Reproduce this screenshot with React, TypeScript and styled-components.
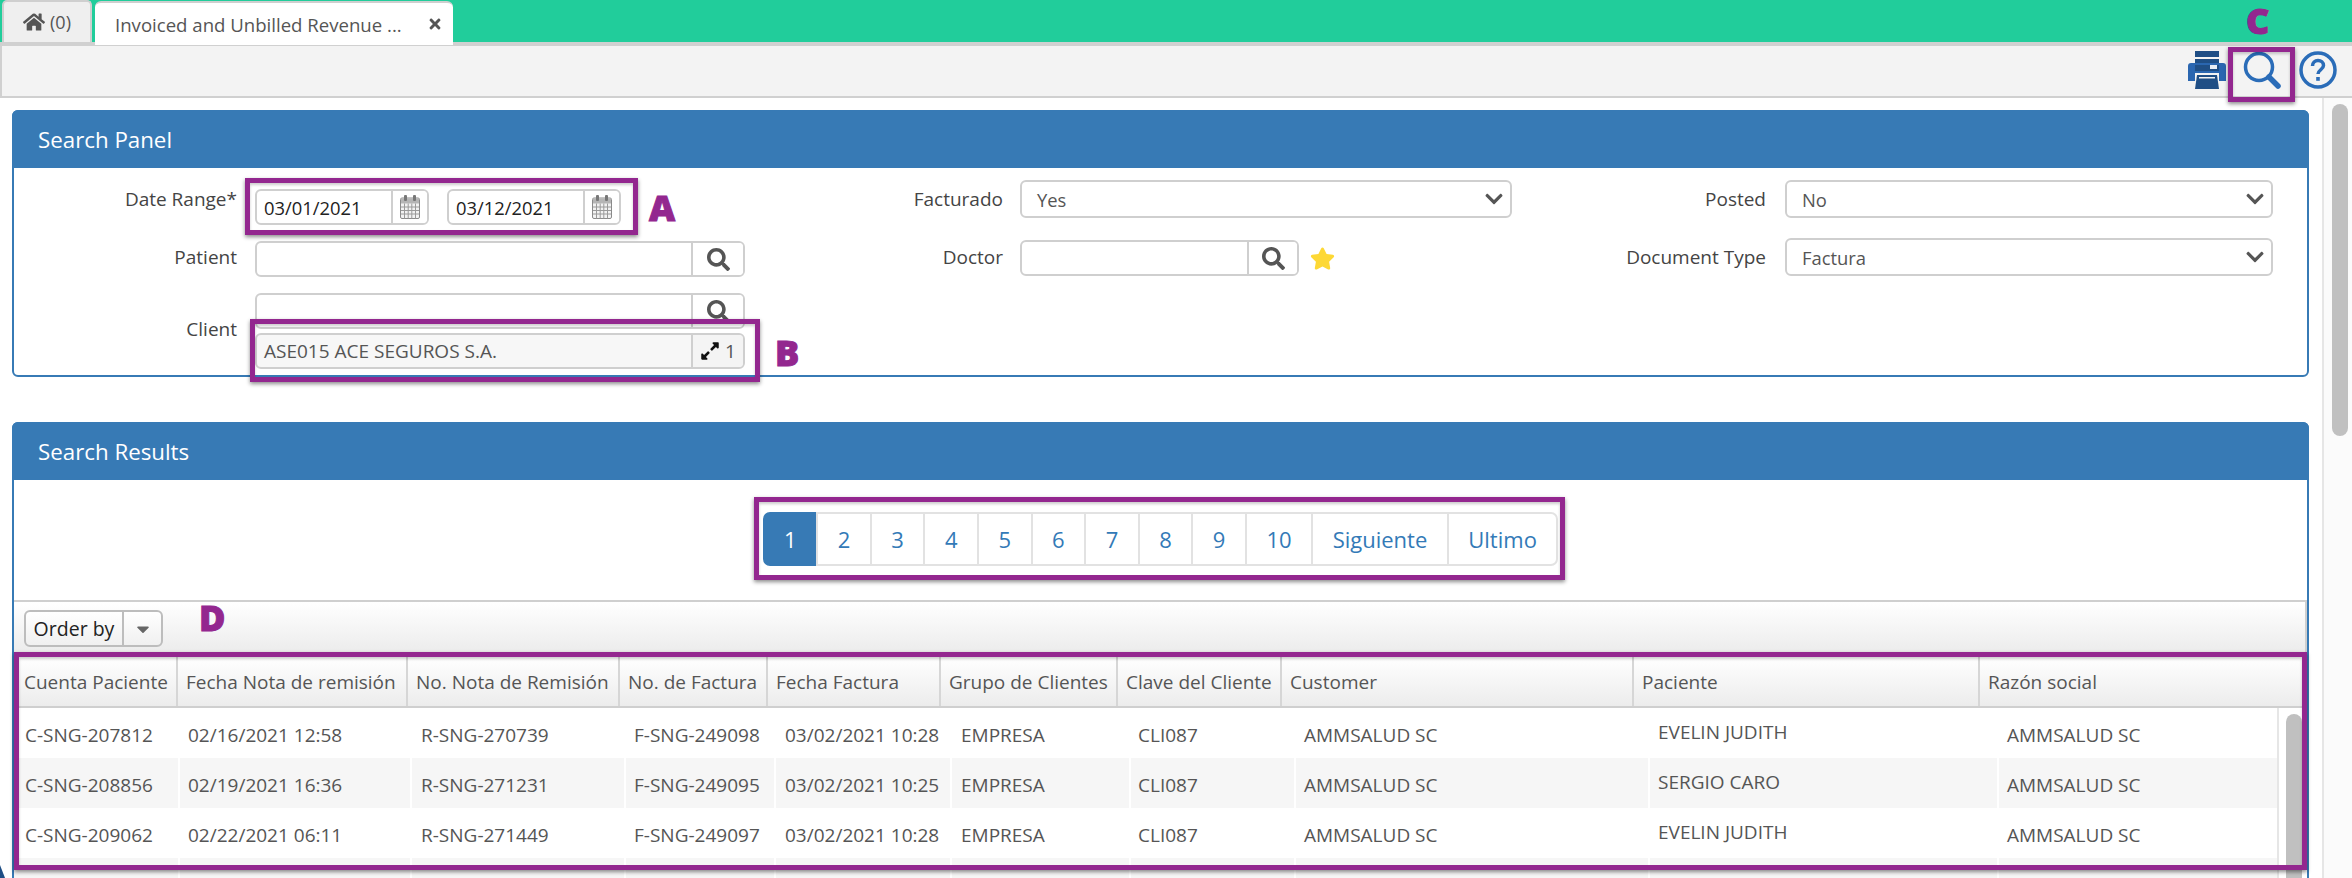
import React from 'react'
import styled, { createGlobalStyle } from 'styled-components'
import { FaHome, FaTimes, FaSearch, FaStar, FaChevronDown, FaExpandAlt, FaCaretDown } from 'react-icons/fa'

const GlobalStyle = createGlobalStyle`
  html, body {
    margin: 0;
    padding: 0;
    background: #ffffff;
  }
  * {
    box-sizing: border-box;
  }
`

const Page = styled.div`
  position: relative;
  width: 2352px;
  height: 878px;
  overflow: hidden;
  display: flex;
  flex-direction: column;
  font-family: "Open Sans", "Liberation Sans", sans-serif;
  color: #444;
`

const TabBar = styled.div`
  height: 46px;
  flex: none;
  display: flex;
  align-items: flex-start;
  gap: 3px;
  padding-left: 2px;
  background: #21cd9b;
  border-bottom: 4px solid #d0d0d0;
`

const HomeTab = styled.div`
  width: 90px;
  height: 42px;
  display: flex;
  align-items: center;
  justify-content: center;
  gap: 5px;
  background: #efefef;
  border: 2px solid #cfcfcf;
  border-bottom: none;
  border-radius: 5px 5px 0 0;
  font-size: 18px;
  color: #555;
`

const ActiveTab = styled.div`
  width: 358px;
  height: 44px;
  margin-top: 1px;
  display: flex;
  align-items: center;
  justify-content: space-between;
  padding: 0 10px 0 20px;
  background: #ffffff;
  border-radius: 6px 6px 0 0;
  border-top: 2px solid #cfcfcf;
  font-size: 18.6px;
  color: #555;
  white-space: nowrap;
`

const Toolbar = styled.div`
  height: 52px;
  flex: none;
  display: flex;
  align-items: center;
  justify-content: flex-end;
  padding: 0 15px 2px 0;
  background: #f3f3f3;
  border-left: 2px solid #d0d0d0;
  border-bottom: 2px solid #d0d0d0;
`

const ToolIcon = styled.svg<{ $gap?: number }>`
  display: block;
  width: 38px;
  height: 38px;
  margin-left: ${({ $gap }) => $gap ?? 18}px;
`

const Main = styled.div`
  flex: 1;
  display: flex;
  min-height: 0;
`

const Content = styled.div`
  width: 2322px;
  flex: none;
  padding: 12px 13px 0 12px;
  display: flex;
  flex-direction: column;
  gap: 45px;
`

const PageScroll = styled.div`
  flex: 1;
  padding: 6px 6px 0 8px;
  background: #fbfbfb;
  border-left: 2px solid #e6e6e6;
`

const PageThumb = styled.div`
  width: 16px;
  height: 332px;
  border-radius: 8px;
  background: #c0c0c0;
`

const Panel = styled.section`
  border: 2px solid #377ab5;
  border-radius: 6px;
  flex: none;
`

const PanelTitle = styled.h2`
  height: 58px;
  margin: -2px -2px 0;
  padding: 0 0 0 26px;
  display: flex;
  align-items: center;
  background: #377ab5;
  border-radius: 6px 6px 0 0;
  color: #ffffff;
  font-size: 22.3px;
  font-weight: 400;
`

const FormGrid = styled.div`
  display: grid;
  grid-template-columns: 241px 490px 275px 492px 273px 488px;
  grid-template-rows: 58px 55px 76px;
  padding-top: 12px;
  height: 207px;
`

const Label = styled.div<{ $top?: number; $pad?: number }>`
  padding-top: ${({ $top }) => $top ?? 8}px;
  padding-right: ${({ $pad }) => $pad ?? 18}px;
  text-align: right;
  font-size: 19px;
  line-height: 22px;
  color: #444;
`

const Cell = styled.div<{ $top?: number }>`
  padding-top: ${({ $top }) => $top ?? 0}px;
  display: flex;
  flex-direction: column;
  gap: 4px;
`

const DateRow = styled.div`
  display: flex;
  gap: 18px;
`

const Group = styled.div<{ $width?: number; $shade?: boolean }>`
  width: ${({ $width }) => ($width ? `${$width}px` : '100%')};
  height: 36px;
  display: flex;
  border: 2px solid #cfcfcf;
  border-radius: 6px;
  background: ${({ $shade }) => ($shade ? '#f7f7f7' : '#ffffff')};
  overflow: hidden;
`

const TextInput = styled.input`
  flex: 1;
  min-width: 0;
  border: none;
  outline: none;
  background: transparent;
  padding: 0 7px;
  font-family: inherit;
  font-size: 18.4px;
  color: #222;
`

const ChipText = styled.div`
  flex: 1;
  padding-left: 7px;
  display: flex;
  align-items: center;
  font-size: 19px;
  color: #555;
`

const Addon = styled.div<{ $width: number; $shade?: boolean }>`
  width: ${({ $width }) => $width}px;
  flex: none;
  display: flex;
  align-items: center;
  justify-content: center;
  gap: 5px;
  border-left: 2px solid #cfcfcf;
  background: ${({ $shade }) => ($shade ? '#f4f4f4' : '#ffffff')};
  color: #555;
  font-size: 19px;
`

const SelectBox = styled.div`
  height: 38px;
  display: flex;
  align-items: center;
  justify-content: space-between;
  padding: 0 6px 0 15px;
  border: 2px solid #cfcfcf;
  border-radius: 6px;
  background: #ffffff;
  font-size: 18.4px;
  color: #555;
`

const DoctorRow = styled.div`
  display: flex;
  align-items: center;
  gap: 11px;
  color: #fdd835;
`

const Pager = styled.nav`
  height: 120px;
  padding-bottom: 2px;
  display: flex;
  align-items: center;
  justify-content: center;
`

const PageLink = styled.a<{ $active?: boolean }>`
  height: 54px;
  display: flex;
  align-items: center;
  padding: 0 19.5px;
  margin-left: -2px;
  border: 2px solid ${({ $active }) => ($active ? '#377ab5' : '#e2e2e2')};
  background: ${({ $active }) => ($active ? '#377ab5' : '#ffffff')};
  color: ${({ $active }) => ($active ? '#ffffff' : '#337ab7')};
  font-size: 22px;
  &:first-child {
    border-radius: 7px 0 0 7px;
    margin-left: 0;
  }
  &:last-child {
    border-radius: 0 7px 7px 0;
  }
`

const ListBar = styled.div`
  height: 52px;
  padding: 8px 0 0 10px;
  border-top: 2px solid #cfcfcf;
  border-right: 2px solid #cfcfcf;
  background: linear-gradient(#ffffff, #ececec);
`

const OrderButton = styled.div`
  width: 139px;
  height: 37px;
  display: flex;
  border: 2px solid #bdbdbd;
  border-radius: 6px;
  background: linear-gradient(#ffffff, #f0f0f0);
  font-size: 19.5px;
  color: #222;
`

const OrderLabel = styled.div`
  width: 98px;
  display: flex;
  align-items: center;
  justify-content: center;
  border-right: 2px solid #bdbdbd;
`

const OrderCaret = styled.div`
  flex: 1;
  display: flex;
  align-items: center;
  justify-content: center;
  color: #666;
`

const HeaderRow = styled.div`
  height: 56px;
  display: flex;
  background: linear-gradient(#ffffff, #ececec);
  border-top: 5px solid #ececec;
  border-bottom: 2px solid #cfcfcf;
`

const HeaderCell = styled.div<{ $width?: number; $pad?: number }>`
  width: ${({ $width }) => ($width ? `${$width}px` : 'auto')};
  flex: ${({ $width }) => ($width ? 'none' : '1')};
  padding-left: ${({ $pad }) => $pad ?? 8}px;
  display: flex;
  align-items: center;
  font-size: 19px;
  color: #555;
  white-space: nowrap;
  border-right: 2px solid #d6d6d6;
  &:last-child {
    border-right: none;
  }
`

const TableBody = styled.div`
  display: flex;
`

const Rows = styled.div`
  width: 2263px;
  flex: none;
`

const Row = styled.div<{ $striped?: boolean }>`
  height: 50px;
  display: grid;
  grid-template-columns: 164px 230px 212px 148px 174px 177px 163px 352px 347px 278px;
  column-gap: 2px;
  & > div {
    background: ${({ $striped }) => ($striped ? '#f6f6f6' : '#ffffff')};
  }
`

const RowCell = styled.div<{ $pad?: number; $raised?: boolean }>`
  padding: ${({ $raised }) => ($raised ? '0 0 3px' : '3px 0 0')};
  padding-left: ${({ $pad }) => $pad ?? 8}px;
  display: flex;
  align-items: center;
  font-size: 19px;
  color: #555;
  white-space: nowrap;
`

const BodyScroll = styled.div`
  width: 25px;
  flex: none;
  padding: 6px 0 0 7px;
  border-left: 2px solid #e6e6e6;
`

const BodyThumb = styled.div`
  width: 16px;
  height: 300px;
  border-radius: 8px;
  background: #c0c0c0;
`

const Callout = styled.div<{ $x: number; $y: number; $w: number; $h: number }>`
  position: absolute;
  left: ${({ $x }) => $x}px;
  top: ${({ $y }) => $y}px;
  width: ${({ $w }) => $w}px;
  height: ${({ $h }) => $h}px;
  border: 5px solid #93278f;
  box-shadow: 0 2px 4px rgba(0, 0, 0, 0.45), inset 0 2px 3px rgba(0, 0, 0, 0.2);
  pointer-events: none;
`

const CalloutLetter = styled.div<{ $x: number; $y: number }>`
  position: absolute;
  left: ${({ $x }) => $x}px;
  top: ${({ $y }) => $y}px;
  font-family: "Open Sans", sans-serif;
  font-weight: 800;
  font-size: 36px;
  line-height: 36px;
  color: #93278f;
  -webkit-text-stroke: 1px #93278f;
`

// sliver of another picture showing at the bottom left of the screenshot
const CornerSliver = styled.div`
  position: absolute;
  left: 0;
  top: 865px;
  width: 5px;
  height: 13px;
  background: #1f4e85;
  clip-path: polygon(0 0, 100% 100%, 0 100%);
`

const CalendarIcon = () => (
  <svg width="22" height="26" viewBox="0 0 22 26">
    <rect x="1.500" y="4" width="19" height="20.500" rx="1.500" fill="#f2f2f2" stroke="#8a8a8a" strokeWidth="1" />
    <rect x="2" y="4.500" width="18" height="5" fill="#b5b5b5" />
    <rect x="5" y="1" width="3" height="6" rx="1" fill="#777" />
    <rect x="14" y="1" width="3" height="6" rx="1" fill="#777" />
    <path d="M2 13h18M2 16.500h18M2 20h18M5.500 9.500v15M9.200 9.500v15M12.800 9.500v15M16.500 9.500v15" stroke="#9a9a9a" strokeWidth="1" />
  </svg>
)

const PrinterIcon = () => (
  <ToolIcon viewBox="0 0 38 38">
    <rect x="7" y="0" width="24" height="6" fill="#1f4e85" />
    <path d="M7 8h24v4H7z" fill="#1f4e85" />
    <path d="M3 12h32a3 3 0 0 1 3 3v15h-7v-8H7v8H0V15a3 3 0 0 1 3-3z" fill="#2a66b0" />
    <rect x="7" y="14" width="24" height="6" fill="#1f4e85" />
    <rect x="22" y="14" width="7" height="4" fill="#e8eef6" />
    <path d="M9 24h20l2 14H7z" fill="#1f4e85" />
    <rect x="11" y="26" width="16" height="1.500" fill="#f3f3f3" />
  </ToolIcon>
)

const LensIcon = () => (
  <ToolIcon viewBox="0 0 38 38" $gap={17}>
    <circle cx="16" cy="16" r="13.500" fill="none" stroke="#2a6cb8" strokeWidth="3.500" />
    <path d="M26 26l9 9" stroke="#2a6cb8" strokeWidth="5.500" strokeLinecap="round" />
  </ToolIcon>
)

const HelpIcon = () => (
  <ToolIcon viewBox="0 0 38 38">
    <circle cx="19" cy="19" r="17" fill="none" stroke="#2a6cb8" strokeWidth="3.500" />
    <path d="M13.500 15c0-3.500 2.500-5.500 5.500-5.500s5.500 2 5.500 5c0 4-5.500 4.500-5.500 8.500" fill="none" stroke="#2a6cb8" strokeWidth="3.500" />
    <rect x="17.200" y="26" width="3.600" height="3.800" fill="#2a6cb8" />
  </ToolIcon>
)

const pages = ['2', '3', '4', '5', '6', '7', '8', '9', '10', 'Siguiente', 'Ultimo']

const columns: { title: string; width?: number; pad?: number }[] = [
  { title: 'Cuenta Paciente', width: 164, pad: 10 },
  { title: 'Fecha Nota de remisión', width: 230 },
  { title: 'No. Nota de Remisión', width: 212 },
  { title: 'No. de Factura', width: 148 },
  { title: 'Fecha Factura', width: 173 },
  { title: 'Grupo de Clientes', width: 177 },
  { title: 'Clave del Cliente', width: 164 },
  { title: 'Customer', width: 352 },
  { title: 'Paciente', width: 346 },
  { title: 'Razón social' },
]

const rows = [
  ['C-SNG-207812', '02/16/2021 12:58', 'R-SNG-270739', 'F-SNG-249098', '03/02/2021 10:28', 'EVELIN JUDITH'],
  ['C-SNG-208856', '02/19/2021 16:36', 'R-SNG-271231', 'F-SNG-249095', '03/02/2021 10:25', 'SERGIO CARO'],
  ['C-SNG-209062', '02/22/2021 06:11', 'R-SNG-271449', 'F-SNG-249097', '03/02/2021 10:28', 'EVELIN JUDITH'],
]

export default function App() {
  return (
    <Page>
      <GlobalStyle />
      <TabBar>
        <HomeTab>
          <FaHome size={22} />
          (0)
        </HomeTab>
        <ActiveTab>
          Invoiced and Unbilled Revenue ...
          <FaTimes size={16} />
        </ActiveTab>
      </TabBar>
      <Toolbar>
        <PrinterIcon />
        <LensIcon />
        <HelpIcon />
      </Toolbar>
      <Main>
        <Content>
          <Panel>
            <PanelTitle>Search Panel</PanelTitle>
            <FormGrid>
              <Label>Date Range*</Label>
              <Cell $top={9}>
                <DateRow>
                  <Group $width={174}>
                    <TextInput defaultValue="03/01/2021" />
                    <Addon $width={36}><CalendarIcon /></Addon>
                  </Group>
                  <Group $width={174}>
                    <TextInput defaultValue="03/12/2021" />
                    <Addon $width={36}><CalendarIcon /></Addon>
                  </Group>
                </DateRow>
              </Cell>
              <Label $pad={17}>Facturado</Label>
              <Cell>
                <SelectBox>Yes<FaChevronDown size={20} /></SelectBox>
              </Cell>
              <Label $pad={19}>Posted</Label>
              <Cell>
                <SelectBox>No<FaChevronDown size={20} /></SelectBox>
              </Cell>

              <Label>Patient</Label>
              <Cell $top={3}>
                <Group>
                  <TextInput />
                  <Addon $width={52}><FaSearch size={23} /></Addon>
                </Group>
              </Cell>
              <Label $pad={17}>Doctor</Label>
              <Cell $top={2}>
                <DoctorRow>
                  <Group $width={279}>
                    <TextInput />
                    <Addon $width={50}><FaSearch size={23} /></Addon>
                  </Group>
                  <FaStar size={25} />
                </DoctorRow>
              </Cell>
              <Label $pad={19}>Document Type</Label>
              <Cell>
                <SelectBox>Factura<FaChevronDown size={20} /></SelectBox>
              </Cell>

              <Label $top={25}>Client</Label>
              <Cell>
                <Group>
                  <TextInput />
                  <Addon $width={52}><FaSearch size={23} /></Addon>
                </Group>
                <Group $shade>
                  <ChipText>ASE015 ACE SEGUROS S.A.</ChipText>
                  <Addon $width={52} $shade><FaExpandAlt size={20} color="#111" />1</Addon>
                </Group>
              </Cell>
            </FormGrid>
          </Panel>

          <Panel>
            <PanelTitle>Search Results</PanelTitle>
            <Pager>
              <PageLink $active>1</PageLink>
              {pages.map((page) => <PageLink key={page}>{page}</PageLink>)}
            </Pager>
            <ListBar>
              <OrderButton>
                <OrderLabel>Order by</OrderLabel>
                <OrderCaret><FaCaretDown size={20} /></OrderCaret>
              </OrderButton>
            </ListBar>
            <HeaderRow>
              {columns.map((col) => (
                <HeaderCell key={col.title} $width={col.width} $pad={col.pad}>{col.title}</HeaderCell>
              ))}
            </HeaderRow>
            <TableBody>
              <Rows>
                {rows.map((row, i) => (
                  <Row key={row[0]} $striped={i % 2 === 1}>
                    <RowCell $pad={11}>{row[0]}</RowCell>
                    <RowCell>{row[1]}</RowCell>
                    <RowCell $pad={9}>{row[2]}</RowCell>
                    <RowCell>{row[3]}</RowCell>
                    <RowCell $pad={9}>{row[4]}</RowCell>
                    <RowCell $pad={9}>EMPRESA</RowCell>
                    <RowCell $pad={7}>CLI087</RowCell>
                    <RowCell>AMMSALUD SC</RowCell>
                    <RowCell $raised>{row[5]}</RowCell>
                    <RowCell>AMMSALUD SC</RowCell>
                  </Row>
                ))}
                <Row $striped>
                  {columns.map((col) => <RowCell key={col.title} />)}
                </Row>
              </Rows>
              <BodyScroll><BodyThumb /></BodyScroll>
            </TableBody>
          </Panel>
        </Content>
        <PageScroll><PageThumb /></PageScroll>
      </Main>

      <Callout $x={245} $y={178} $w={393} $h={57} />
      <Callout $x={250} $y={319} $w={510} $h={63} />
      <Callout $x={2228} $y={47} $w={67} $h={55} />
      <Callout $x={754} $y={497} $w={811} $h={83} />
      <Callout $x={14} $y={652} $w={2293} $h={218} />
      <CalloutLetter $x={649} $y={190}>A</CalloutLetter>
      <CalloutLetter $x={775} $y={335}>B</CalloutLetter>
      <CalloutLetter $x={2246} $y={3}>C</CalloutLetter>
      <CalloutLetter $x={199} $y={600}>D</CalloutLetter>
      <CornerSliver />
    </Page>
  )
}
